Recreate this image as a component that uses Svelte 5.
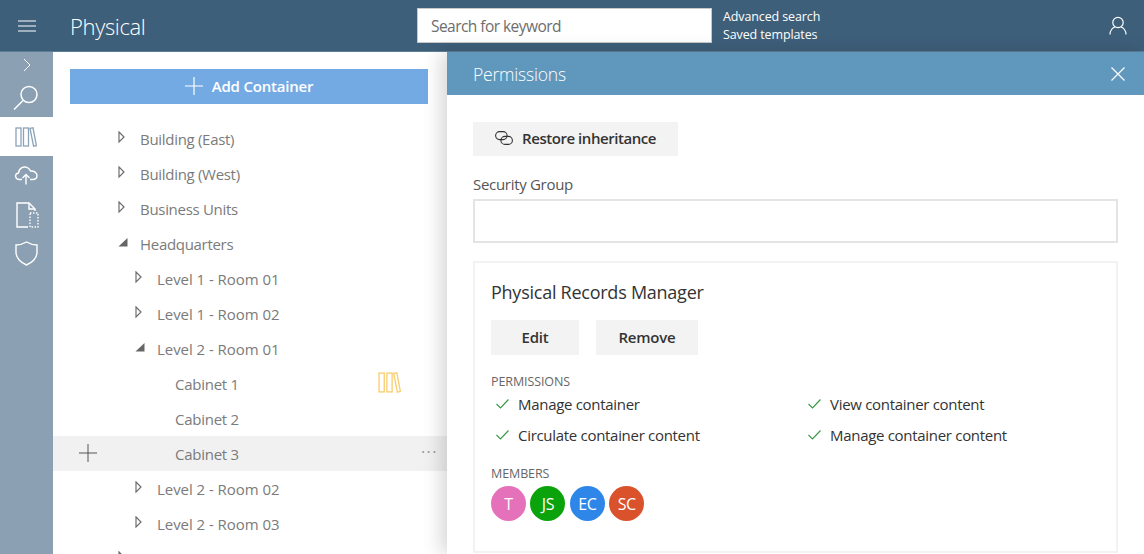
<script>
  const tree = [
    { label: 'Building (East)', depth: 0, icon: 'closed' },
    { label: 'Building (West)', depth: 0, icon: 'closed' },
    { label: 'Business Units', depth: 0, icon: 'closed' },
    { label: 'Headquarters', depth: 0, icon: 'open' },
    { label: 'Level 1 - Room 01', depth: 1, icon: 'closed' },
    { label: 'Level 1 - Room 02', depth: 1, icon: 'closed' },
    { label: 'Level 2 - Room 01', depth: 1, icon: 'open' },
    { label: 'Cabinet 1', depth: 2, icon: '', badge: true },
    { label: 'Cabinet 2', depth: 2, icon: '' },
    { label: 'Cabinet 3', depth: 2, icon: '', selected: true },
    { label: 'Level 2 - Room 02', depth: 1, icon: 'closed' },
    { label: 'Level 2 - Room 03', depth: 1, icon: 'closed' },
    { label: '', depth: 0, icon: 'closed' }
  ];
  const perms = ['Manage container', 'View container content', 'Circulate container content', 'Manage container content'];
  const members = [
    { t: 'T', c: '#e671bb' },
    { t: 'JS', c: '#0ba30b' },
    { t: 'EC', c: '#2f86e9' },
    { t: 'SC', c: '#d9522b' }
  ];
</script>

{#snippet books(color, w, h)}
  <svg width={w} height={h} viewBox="0 0 22 20" fill="none" stroke={color} stroke-width="1.300">
    <rect x="1" y="1" width="5" height="18" />
    <rect x="8.500" y="1" width="5" height="18" />
    <path d="M15 1.400 L18 0.800 L21.400 18.600 L18.600 19.200 Z" />
  </svg>
{/snippet}

<div class="page">
  <header class="top">
    <button class="burger" aria-label="Menu">
      <svg width="18" height="12" viewBox="0 0 18 12" stroke="#fff" stroke-width="1.100"><path d="M0 1h18M0 6h18M0 11h18" /></svg>
    </button>
    <div class="title">Physical</div>
    <div class="search">Search for keyword</div>
    <div class="links"><span>Advanced search</span><span>Saved templates</span></div>
    <svg class="user" width="18" height="20" viewBox="0 0 18 20" fill="none" stroke="#fff" stroke-width="1.200">
      <circle cx="9" cy="6.500" r="5.200" />
      <path d="M1 18.500 C1 14 4 11.500 6 11 M17 18.500 C17 14 14 11.500 12 11" />
    </svg>
  </header>

  <div class="body">
    <nav class="rail">
      <div class="rail-item chevron">
        <svg width="8" height="14" viewBox="0 0 8 14" fill="none" stroke="#fff" stroke-width="1"><path d="M1 1l6 6-6 6" /></svg>
      </div>
      <div class="rail-item find">
        <svg width="26" height="25" viewBox="0 0 26 25" fill="none" stroke="#fff" stroke-width="1.500">
          <circle cx="16" cy="9.500" r="8" /><path d="M10 15.500 L1 24.500" />
        </svg>
      </div>
      <div class="rail-item active">{@render books('#8ba3b8', 22, 20)}</div>
      <div class="rail-item cloud">
        <svg width="24" height="20" viewBox="0 0 24 20" fill="none" stroke="#fff" stroke-width="1.400">
          <path d="M8 14.500H5.500C1 14.500 0 9 4.500 8 C5 3 10 0.500 14 3 C15.500 4 16 5 16.500 6 C20 5.500 23 8 23 10.500 C23 13 21 14.500 18.500 14.500 H16" />
          <path d="M12 19.500V10M8.500 13l3.500-3.500 3.500 3.500" />
        </svg>
      </div>
      <div class="rail-item doc">
        <svg width="23" height="26" viewBox="0 0 23 26" fill="none" stroke="#fff" stroke-width="1.400">
          <path d="M12 25H1V1H13L19 7V9" /><path d="M13 1V7H19" />
          <path d="M14 11H22V25H14Z" stroke-dasharray="1.500 1.500" />
        </svg>
      </div>
      <div class="rail-item shield">
        <svg width="23" height="25" viewBox="0 0 23 25" fill="none" stroke="#fff" stroke-width="1.400">
          <path d="M11.500 1 C8 3 5 4 1 4 V11 C1 18 6 21.500 11.500 24 C17 21.500 22 18 22 11 V4 C18 4 15 3 11.500 1Z" />
        </svg>
      </div>
    </nav>

    <section class="tree">
      <button class="add">
        <svg width="18" height="18" viewBox="0 0 18 18" stroke="#fff" stroke-width="1.200"><path d="M9 0v18M0 9h18" /></svg>
        <span>Add Container</span>
      </button>
      <ul class="rows">
        {#each tree as row}
          <li class="row depth{row.depth}" class:selected={row.selected}>
            {#if row.selected}
              <svg class="row-plus" width="18" height="18" viewBox="0 0 18 18" stroke="#555" stroke-width="1"><path d="M9 0v18M0 9h18" /></svg>
            {/if}
            <span class="caret">
              {#if row.icon === 'closed'}
                <svg width="7" height="12" viewBox="0 0 7 12"><path d="M1 1l5 5-5 5Z" fill="none" stroke="#6f6f6f" stroke-width="1.200" /></svg>
              {:else if row.icon === 'open'}
                <svg width="10" height="10" viewBox="0 0 10 10"><path d="M9.500 1V9.500H0.500Z" fill="#666" /></svg>
              {/if}
            </span>
            <span class="label">{row.label}</span>
            {#if row.badge}
              <span class="badge">{@render books('#f9cf74', 23, 21)}</span>
            {/if}
            {#if row.selected}
              <span class="dots">···</span>
            {/if}
          </li>
        {/each}
      </ul>
    </section>

    <aside class="panel">
      <div class="panel-head">
        <span>Permissions</span>
        <svg width="14" height="14" viewBox="0 0 14 14" stroke="#fff" stroke-width="1.200"><path d="M0.500 0.500l13 13M13.500 0.500l-13 13" /></svg>
      </div>
      <div class="panel-body">
        <button class="soft restore">
          <svg width="18" height="14" viewBox="0 0 18 14" fill="none" stroke="#333" stroke-width="1.100">
            <rect x="0.600" y="0.600" width="11.500" height="8" rx="4" />
            <rect x="5.900" y="5.400" width="11.500" height="8" rx="4" />
          </svg>
          <span>Restore inheritance</span>
        </button>
        <div class="sg-label">Security Group</div>
        <div class="sg-input"></div>
        <div class="card">
          <h2>Physical Records Manager</h2>
          <div class="actions">
            <button class="soft edit">Edit</button>
            <button class="soft remove">Remove</button>
          </div>
          <div class="caps">PERMISSIONS</div>
          <div class="perms">
            {#each perms as p}
              <div class="perm">
                <svg width="13" height="10" viewBox="0 0 13 10" fill="none" stroke="#3d9a46" stroke-width="1.200"><path d="M0.500 5l4 4 8-8.500" /></svg>
                <span>{p}</span>
              </div>
            {/each}
          </div>
          <div class="caps members-cap">MEMBERS</div>
          <div class="members">
            {#each members as m}
              <span class="avatar" style:background={m.c}>{m.t}</span>
            {/each}
          </div>
        </div>
      </div>
    </aside>
  </div>
</div>

<style>
  :global(body) { margin: 0; background: #fff; }
  * { box-sizing: border-box; }
  .page { width: 1144px; height: 554px; overflow: hidden; display: flex; flex-direction: column; font-family: "Open Sans", "Noto Sans", sans-serif; color: #333; }
  button { font-family: inherit; border: 0; padding: 0; }

  .top { height: 52px; flex: none; background: #3e5f7a; border-bottom: 1px solid #5d7d96; display: flex; align-items: center; color: #fff; }
  .burger { width: 53px; height: 100%; background: transparent; display: flex; align-items: center; justify-content: center; }
  .title { width: 364px; padding-left: 17px; font-size: 22px; font-weight: 300; letter-spacing: -0.35px; }
  .search { width: 295px; height: 35px; background: #fff; border: 1px solid #c8c8c8; color: #6d6d6d; font-size: 15.500px; line-height: 34px; padding-left: 13px; letter-spacing: -0.55px; }
  .links { margin-left: 11px; padding-top: 1px; display: flex; flex-direction: column; font-size: 12.500px; line-height: 18px; letter-spacing: -0.12px; }
  .user { margin-left: auto; margin-right: 17px; }

  .body { flex: 1; display: flex; min-height: 0; }
  .rail { width: 53px; flex: none; background: #8ba0b2; display: flex; flex-direction: column; }
  .rail-item { display: flex; align-items: center; justify-content: center; }
  .chevron { height: 25px; }
  .find { height: 40px; padding-right: 1px; }
  .active { height: 39px; background: #fff; padding-right: 1px; }
  .cloud { height: 38px; padding-right: 1px; }
  .doc { height: 41px; padding-left: 1px; }
  .shield { height: 37px; padding-right: 1px; }

  .tree { width: 394px; flex: none; display: flex; flex-direction: column; padding-top: 17px; }
  .add { margin-left: 17px; width: 358px; height: 35px; flex: none; background: #74aae3; color: #fff; font-size: 15px; font-weight: 600; letter-spacing: -0.2px; padding-bottom: 2px; display: flex; align-items: center; justify-content: center; gap: 9px; }
  .rows { list-style: none; margin: 17px 0 0; padding: 0; }
  .row { height: 35px; display: flex; align-items: center; color: #7b7b7b; font-size: 15px; letter-spacing: -0.3px; position: relative; }
  .row.selected { background: #f1f1f1; }
  .caret { width: 22px; display: flex; align-items: center; flex: none; margin-top: -3px; }
  .depth0 { padding-left: 65px; }
  .depth1 { padding-left: 82px; letter-spacing: -0.05px; }
  .depth2 { padding-left: 96px; letter-spacing: -0.25px; }
  .depth2 .caret { width: 26px; }
  .label { flex: none; }
  .row-plus { position: absolute; left: 26px; top: 8px; }
  .badge { margin-left: auto; margin-right: 46px; display: flex; margin-top: -2px; }
  .dots { margin-left: auto; margin-right: 9px; font-size: 16px; letter-spacing: 1.500px; color: #999; margin-top: -4px; }

  .panel { flex: 1; min-width: 0; display: flex; flex-direction: column; box-shadow: -6px 0 18px rgba(0, 0, 0, 0.16); background: #fff; position: relative; }
  .panel-head { height: 43px; flex: none; background: #6097bd; color: #fff; display: flex; align-items: center; justify-content: space-between; padding: 0 19px 0 26px; font-size: 17.500px; font-weight: 300; letter-spacing: -0.2px; }
  .panel-body { padding: 27px 26px 0; flex: 1; }
  .soft { background: #f3f3f3; color: #333; font-weight: 600; font-size: 15px; letter-spacing: -0.2px; padding-bottom: 2px; display: flex; align-items: center; justify-content: center; }
  .restore { width: 205px; height: 34px; gap: 9px; letter-spacing: -0.45px; }
  .sg-label { margin-top: 18px; font-size: 15px; color: #555; line-height: 21px; letter-spacing: -0.3px; }
  .sg-input { margin-top: 4px; height: 44px; border: 2px solid #e4e4e4; }
  .card { margin-top: 18px; height: 292px; border: 2px solid #f2f2f2; padding: 16px 16px 0; }
  h2 { margin: 0; font-size: 18px; font-weight: 400; line-height: 27px; color: #333; letter-spacing: -0.25px; }
  .actions { margin-top: 14px; display: flex; gap: 17px; }
  .edit { width: 88px; height: 35px; }
  .remove { width: 102px; height: 35px; }
  .caps { font-size: 12.500px; color: #666; line-height: 16px; letter-spacing: -0.1px; }
  .actions + .caps { margin-top: 19px; }
  .perms { display: grid; grid-template-columns: 312px 1fr; margin-top: -2px; }
  .perm { height: 31px; display: flex; align-items: center; gap: 9px; padding-left: 5px; font-size: 15px; letter-spacing: -0.3px; color: #333; }
  .members-cap { margin-top: 16px; }
  .members { margin-top: 4px; display: flex; gap: 4.400px; }
  .avatar { width: 35px; height: 35px; border-radius: 50%; color: #fff; font-size: 16px; display: flex; align-items: center; justify-content: center; letter-spacing: -0.5px; }
</style>
